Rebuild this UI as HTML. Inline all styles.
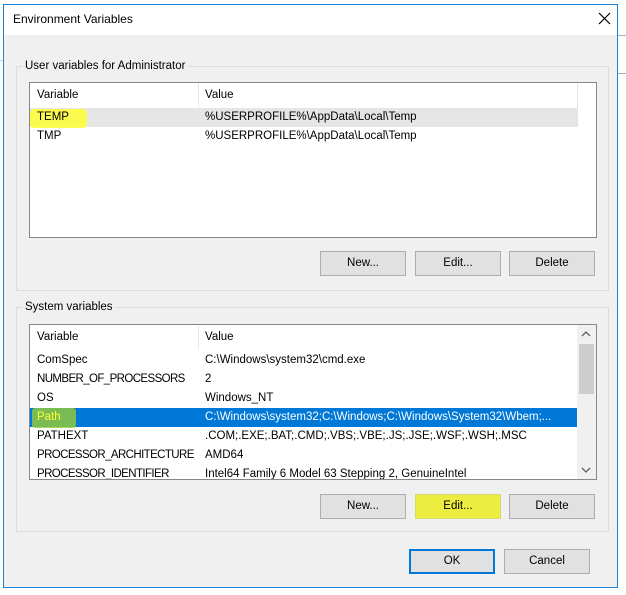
<!DOCTYPE html>
<html><head><style>
*{margin:0;padding:0;box-sizing:border-box}
body{width:626px;height:595px;background:#fff;font-family:"Liberation Sans",sans-serif;font-size:11.5px;color:#000;position:relative;overflow:hidden}
.a{position:absolute}
.dlg{left:3px;top:4px;width:615px;height:584px;border:1px solid #1883d7;background:#f0f0f0}
.tb{left:4px;top:5px;width:613px;height:30px;background:#fff}
.grp{border:1px solid #dcdcdc}
.list{background:#fff;border:1px solid #828790}
.btn{background:#e1e1e1;border:1px solid #adadad;text-align:center;line-height:23px}
.t{white-space:nowrap;line-height:19px}
.u{letter-spacing:-0.6px}
.hl{background:#ffff33;opacity:.85;border-radius:4px}
</style></head><body>
<div class="a" style="left:0;top:60px;width:3px;height:1px;background:#ccc"></div>
<div class="a" style="left:618px;top:35px;width:8px;height:1px;background:#aac"></div>
<div class="a" style="left:618px;top:73px;width:8px;height:1px;background:#aac"></div>
<div class="a dlg"></div>
<div class="a tb"></div>
<div class="a t" style="left:13px;top:10px;font-size:12px">Environment Variables</div>
<svg class="a" style="left:598px;top:12px" width="13" height="13"><path d="M1 1L12 12M12 1L1 12" stroke="#000" stroke-width="1.2"/></svg>

<div class="a grp" style="left:16px;top:66px;width:593px;height:225px"></div>
<div class="a t" style="left:22px;top:57px;background:#f0f0f0;padding:0 3px">User variables for Administrator</div>
<div class="a list" style="left:29px;top:82px;width:568px;height:156px"></div>
<div class="a" style="left:198px;top:84px;width:1px;height:23px;background:#e5e5e5"></div>
<div class="a" style="left:577px;top:84px;width:1px;height:43px;background:#e5e5e5"></div>
<div class="a t" style="left:37px;top:86px">Variable</div>
<div class="a t" style="left:205px;top:86px">Value</div>
<div class="a" style="left:30px;top:108px;width:547px;height:19px;background:#e5e5e5"></div>
<div class="a hl" style="left:30px;top:109px;width:57px;height:19px"></div>
<div class="a t" style="left:37px;top:108px">TEMP</div>
<div class="a t" style="left:205px;top:108px">%USERPROFILE%\AppData\Local\Temp</div>
<div class="a t" style="left:37px;top:127px">TMP</div>
<div class="a t" style="left:205px;top:127px">%USERPROFILE%\AppData\Local\Temp</div>
<div class="a btn" style="left:320px;top:251px;width:86px;height:25px">New...</div>
<div class="a btn" style="left:415px;top:251px;width:86px;height:25px">Edit...</div>
<div class="a btn" style="left:509px;top:251px;width:86px;height:25px">Delete</div>

<div class="a grp" style="left:16px;top:307px;width:593px;height:225px"></div>
<div class="a t" style="left:22px;top:298px;background:#f0f0f0;padding:0 3px">System variables</div>
<div class="a list" style="left:29px;top:324px;width:568px;height:156px;overflow:hidden">
<div class="a" style="left:168px;top:1px;width:1px;height:23px;background:#e5e5e5"></div>
<div class="a t" style="left:7px;top:3px">Variable</div>
<div class="a t" style="left:175px;top:3px">Value</div>
<div class="a" style="left:0;top:83px;width:547px;height:19px;background:#0078d7"></div>
<div class="a" style="left:2px;top:83px;width:44px;height:20px;background:#9c3;opacity:.8;border-radius:3px"></div>
<div class="a t" style="left:7px;top:26px">ComSpec</div><div class="a t" style="left:175px;top:26px">C:\Windows\system32\cmd.exe</div>
<div class="a t u" style="left:7px;top:45px">NUMBER_OF_PROCESSORS</div><div class="a t" style="left:175px;top:45px">2</div>
<div class="a t" style="left:7px;top:64px">OS</div><div class="a t" style="left:175px;top:64px">Windows_NT</div>
<div class="a t" style="left:7px;top:83px;color:#ff3">Path</div><div class="a t" style="left:175px;top:83px;color:#fff">C:\Windows\system32;C:\Windows;C:\Windows\System32\Wbem;...</div>
<div class="a t" style="left:7px;top:102px">PATHEXT</div><div class="a t" style="left:175px;top:102px">.COM;.EXE;.BAT;.CMD;.VBS;.VBE;.JS;.JSE;.WSF;.WSH;.MSC</div>
<div class="a t u" style="left:7px;top:121px">PROCESSOR_ARCHITECTURE</div><div class="a t" style="left:175px;top:121px">AMD64</div>
<div class="a t u" style="left:7px;top:140px">PROCESSOR_IDENTIFIER</div><div class="a t" style="left:175px;top:140px">Intel64 Family 6 Model 63 Stepping 2, GenuineIntel</div>
<div class="a" style="left:547px;top:0;width:19px;height:154px;background:#f0f0f0"></div>
<div class="a" style="left:549px;top:19px;width:15px;height:50px;background:#cdcdcd"></div>
<svg class="a" style="left:551px;top:5px" width="10" height="8"><path d="M1 6L5 2L9 6" fill="none" stroke="#606060" stroke-width="1.3"/></svg>
<svg class="a" style="left:551px;top:141px" width="10" height="8"><path d="M1 2L5 6L9 2" fill="none" stroke="#606060" stroke-width="1.3"/></svg>
</div>
<div class="a btn" style="left:320px;top:494px;width:86px;height:25px">New...</div>
<div class="a btn" style="left:415px;top:494px;width:86px;height:25px;background:#eded40;border-color:#d8d870">Edit...</div>
<div class="a btn" style="left:509px;top:494px;width:86px;height:25px">Delete</div>

<div class="a btn" style="left:409px;top:549px;width:86px;height:25px;border:2px solid #0078d7;line-height:21px">OK</div>
<div class="a btn" style="left:504px;top:549px;width:86px;height:25px">Cancel</div>
</body></html>
